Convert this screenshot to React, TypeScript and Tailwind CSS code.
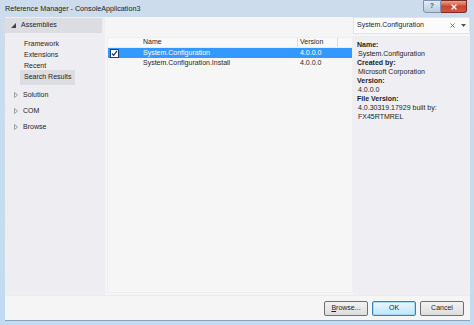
import { X } from 'lucide-react';

const leftItems = ['Framework', 'Extensions', 'Recent', 'Search Results'];
const groups = ['Solution', 'COM', 'Browse'];

const details: { label: string; lines: string[] }[] = [
  { label: 'Name:', lines: ['System.Configuration'] },
  { label: 'Created by:', lines: ['Microsoft Corporation'] },
  { label: 'Version:', lines: ['4.0.0.0'] },
  { label: 'File Version:', lines: ['4.0.30319.17929 built by:', 'FX45RTMREL'] },
];

function CheckIcon() {
  return (
    <svg width="9" height="9" viewBox="0 0 9 9">
      <rect x="0.5" y="0.5" width="8" height="8" fill="#ffffff" stroke="#1c3f75" />
      <path d="M2 4.5 L3.6 6.3 L7 2" fill="none" stroke="#1c3f75" strokeWidth="1.3" />
    </svg>
  );
}

export default function App() {
  return (
    <div className="w-[474px] h-[325px] flex flex-col bg-gradient-to-b from-[#cddcec] to-[#c2dbf1] font-['Liberation_Sans',Arial,sans-serif] text-[7px] text-[#1e1e1e] overflow-hidden">
      {/* Title bar */}
      <div className="h-[17px] flex items-start justify-between pl-[5px] shrink-0">
        <span className="mt-[4px] text-[7.2px] text-[#1b1b1b]">Reference Manager - ConsoleApplication3</span>
        <div className="flex mr-[7px]">
          <div className="w-[18px] h-[13px] rounded-bl-[3px] border border-[#7e93ad] bg-gradient-to-b from-[#e3ecf5] to-[#b9cbe0] flex items-center justify-center text-[7px] text-[#4a5d78] font-bold">
            ?
          </div>
          <div className="w-[26px] h-[13px] rounded-br-[3px] border border-l-0 border-[#7a2a22] bg-gradient-to-b from-[#e8a493] via-[#c9462e] to-[#d0583e] flex items-center justify-center">
            <X className="w-[8px] h-[8px] text-white" strokeWidth={4} />
          </div>
        </div>
      </div>

      {/* Client area */}
      <div className="flex-1 ml-[5px] mr-[4px] mb-[4px] border-b border-[#8fa3b8] bg-[#f5f5f5] flex flex-col">
        <div className="flex flex-1">
          {/* Left panel */}
          <div className="w-[100px] bg-[#eeedf2] pt-[1px]">
            <div className="h-[15px] w-[97px] bg-[#dcdce3] flex items-center pl-[6px]">
              <svg width="5" height="5" viewBox="0 0 5 5" className="mr-[5px]">
                <path d="M5 0 L5 5 L0 5 Z" fill="#444" />
              </svg>
              <span>Assemblies</span>
            </div>
            <div className="mt-[6px] flex flex-col">
              {leftItems.map((item) => (
                <div key={item} className="h-[11px] flex items-center pl-[15px]">
                  <span className={item === 'Search Results' ? 'bg-[#dcdce3] px-[4px] py-[2px]' : 'px-[4px]'}>
                    {item}
                  </span>
                </div>
              ))}
            </div>
            <div className="mt-[4px] flex flex-col">
              {groups.map((g) => (
                <div key={g} className="h-[16px] flex items-center pl-[9px]">
                  <svg width="4" height="6" viewBox="0 0 4 6" className="mr-[5px]">
                    <path d="M0.5 0.5 L3.5 3 L0.5 5.5 Z" fill="none" stroke="#8a8a8a" strokeWidth="0.8" />
                  </svg>
                  <span>{g}</span>
                </div>
              ))}
            </div>
          </div>

          {/* Middle list */}
          <div className="flex-1 flex flex-col pt-[20px] pl-[2px] pb-[2px]">
            <div className="flex-1 border border-[#efefef] bg-[#f6f6f6] flex flex-col">
              <div className="h-[10px] flex bg-[#f9f9f9] border-b border-[#ececec]">
                <div className="w-[33px]" />
                <div className="w-[157px] pl-[2px] border-r border-[#dcdcdc] flex items-center">Name</div>
                <div className="w-[40px] pl-[2px] border-r border-[#dcdcdc] flex items-center">Version</div>
                <div className="flex-1" />
              </div>
              <div className="h-[10px] flex items-center bg-[#3399ff] text-white">
                <div className="w-[33px] pl-[2px] flex items-center">
                  <CheckIcon />
                </div>
                <div className="w-[157px] pl-[2px]">System.Configuration</div>
                <div className="w-[40px] pl-[2px]">4.0.0.0</div>
              </div>
              <div className="h-[10px] flex items-center">
                <div className="w-[33px]" />
                <div className="w-[157px] pl-[2px]">System.Configuration.Install</div>
                <div className="w-[40px] pl-[2px]">4.0.0.0</div>
              </div>
            </div>
          </div>

          {/* Right panel */}
          <div className="w-[117px] flex flex-col">
            <div className="h-[17px] bg-[#fbfbfb] border border-[#e4e4e8] flex items-center pl-[3px] pr-[3px]">
              <span className="flex-1">System.Configuration</span>
              <X className="w-[7px] h-[7px] text-[#3d6fb5] mr-[5px]" strokeWidth={3} />
              <svg width="5" height="3" viewBox="0 0 5 3">
                <path d="M0 0 L5 0 L2.5 3 Z" fill="#555" />
              </svg>
            </div>
            <div className="flex-1 mt-[2px] bg-[#efeef3] pl-[4px] pt-[4px] leading-[9px]">
              {details.map((d) => (
                <div key={d.label}>
                  <div className="font-bold">{d.label}</div>
                  {d.lines.map((l) => (
                    <div key={l} className="pl-[1px]">{l}</div>
                  ))}
                </div>
              ))}
            </div>
          </div>
        </div>

        {/* Footer */}
        <div className="h-[25px] shrink-0 flex items-center justify-end gap-[4px] pr-[6px] border-t border-[#ececec]">
          <button className="w-[44px] h-[15px] rounded-[2px] border border-[#707070] bg-gradient-to-b from-[#f2f2f2] to-[#dddddd] text-[7px]">
            <span className="underline">B</span>rowse...
          </button>
          <button className="w-[44px] h-[15px] rounded-[2px] border border-[#3c7fb1] bg-gradient-to-b from-[#eaf6fd] to-[#bee6fd] text-[7px] shadow-[inset_0_0_0_1px_#a8d8f2]">
            OK
          </button>
          <button className="w-[44px] h-[15px] rounded-[2px] border border-[#707070] bg-gradient-to-b from-[#f2f2f2] to-[#dddddd] text-[7px]">
            Cancel
          </button>
        </div>
      </div>
    </div>
  );
}
